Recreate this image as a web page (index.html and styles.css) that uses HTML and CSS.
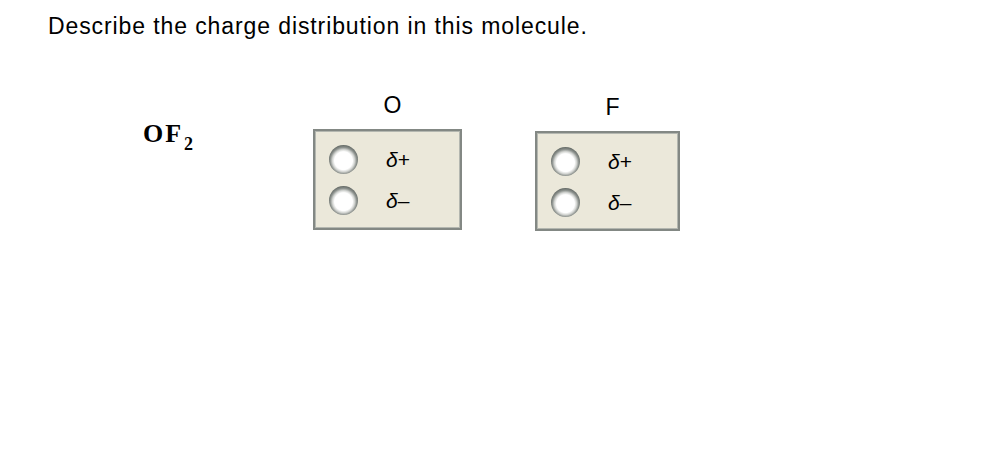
FILE: index.html
```html
<!DOCTYPE html>
<html lang="en">
<head>
    <meta charset="UTF-8">
    <meta name="viewport" content="width=device-width, initial-scale=1.0">
    <title>Charge distribution</title>
    <link rel="stylesheet" href="styles.css">
</head>
<body>
    <div class="question">Describe the charge distribution in this molecule.</div>

    <div class="problem">
        <div class="formula">OF<sub>2</sub></div>

        <div class="atom atom-o">
            <div class="atom-label">O</div>
            <div class="choice-box">
                <label class="option"><span class="radio"></span><span class="charge"><i>δ</i>+</span></label>
                <label class="option"><span class="radio"></span><span class="charge"><i>δ</i>–</span></label>
            </div>
        </div>

        <div class="atom atom-f">
            <div class="atom-label">F</div>
            <div class="choice-box">
                <label class="option"><span class="radio"></span><span class="charge"><i>δ</i>+</span></label>
                <label class="option"><span class="radio"></span><span class="charge"><i>δ</i>–</span></label>
            </div>
        </div>
    </div>
</body>
</html>
```

FILE: styles.css
```css
body {
    font-family: "Liberation Sans", Arial, sans-serif;
    margin: 0;
    background: #fff;
    color: #000;
}
.question {
    font-size: 23px;
    line-height: 26px;
    letter-spacing: 0.9px;
    padding: 13px 0 0 48px;
}
.problem {
    display: flex;
    align-items: flex-start;
    margin-top: 53px;
    padding-left: 143px;
}
.formula {
    width: 170px;
    margin-top: 27px;
    font-family: "Liberation Serif", "Times New Roman", serif;
    font-weight: bold;
    font-size: 26px;
    line-height: 29px;
    letter-spacing: 2px;
}
.formula sub {
    font-size: 18px;
    vertical-align: -8px;
    line-height: 0;
    margin-left: 1px;
}
.atom {
    display: flex;
    flex-direction: column;
}
.atom-o { width: 149px; }
.atom-f {
    width: 145px;
    margin-left: 73px;
    margin-top: 2px;
}
.atom-label {
    font-size: 23px;
    line-height: 26px;
    text-align: center;
    padding-left: 10px;
    margin-bottom: 11px;
}
.choice-box {
    height: 101px;
    box-sizing: border-box;
    border: 2px solid #838884;
    box-shadow: inset 0 0 0 1px #b4b7b0;
    background: #ebe8da;
    padding: 8px 0 0 14px;
}
.atom-f .choice-box { height: 100px; }
.option {
    display: flex;
    align-items: center;
    height: 41px;
}
.radio {
    width: 29px;
    height: 29px;
    border-radius: 50%;
    background: radial-gradient(circle at 50% 54%, #fff 0, #fff 42%, #d3d5d2 52%, #8c918d 62%, #5f6561 74%, #737874 88%, #a6aaa6 100%);
}
.charge {
    margin-left: 28px;
    font-size: 21px;
}
.charge i {
    font-style: italic;
}
```
